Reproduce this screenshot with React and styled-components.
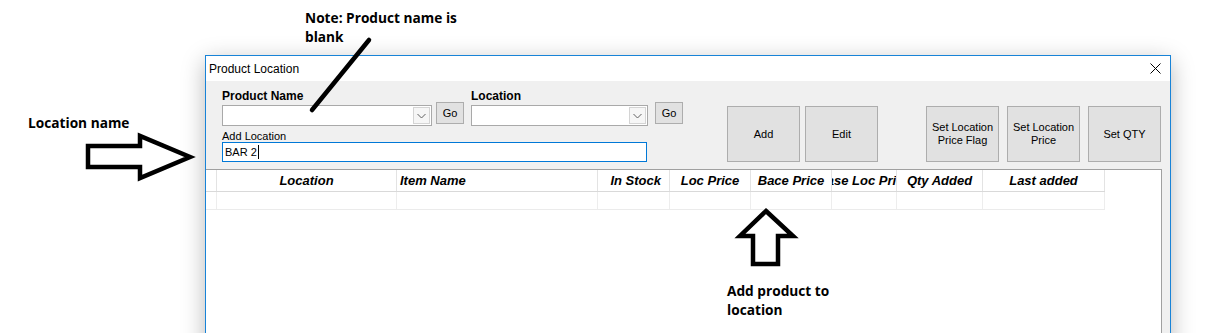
import React from "react";
import styled, { createGlobalStyle } from "styled-components";

const GlobalStyle = createGlobalStyle`
  html, body {
    margin: 0;
    padding: 0;
    background: #ffffff;
  }
  body {
    font-family: "Liberation Sans", Arial, sans-serif;
    color: #000000;
  }
`;

const Page = styled.div`
  position: relative;
  width: 1205px;
  height: 333px;
  overflow: hidden;
  background: #ffffff;
  padding: 55px 0 0 205px;
  box-sizing: border-box;
`;

const Window = styled.div`
  width: 966px;
  height: 320px;
  box-sizing: border-box;
  border: 1px solid #1883d7;
  background: #f0f0f0;
  box-shadow: 0 6px 22px rgba(0, 0, 0, 0.28);
  display: flex;
  flex-direction: column;
`;

const TitleBar = styled.div`
  height: 25px;
  flex: none;
  background: #ffffff;
  display: flex;
  align-items: center;
  justify-content: space-between;
  padding: 0 9px 0 3px;
  font-size: 12px;
`;

const TopArea = styled.div`
  height: 88px;
  flex: none;
  display: flex;
  align-items: flex-start;
  padding-left: 16px;
`;

const Form = styled.div`
  display: flex;
  flex-direction: column;
  padding-top: 8px;
`;

const FieldsRow = styled.div`
  display: flex;
`;

const Field = styled.div`
  display: flex;
  flex-direction: column;
  margin-left: ${(p) => p.$offset || 0}px;
`;

const BoldLabel = styled.div`
  font-size: 12px;
  font-weight: bold;
  line-height: 15px;
  height: 13px;
`;

const ComboRow = styled.div`
  display: flex;
  align-items: flex-start;
`;

const Combo = styled.div`
  width: ${(p) => p.$width}px;
  height: 21px;
  margin-top: 3px;
  box-sizing: border-box;
  border: 1px solid #a9a9a9;
  background: #ffffff;
  display: flex;
  justify-content: flex-end;
  padding: 1px;
`;

const ComboArrow = styled.div`
  width: 17px;
  box-sizing: border-box;
  border: 1px solid #d4d4d4;
  background: #f6f6f6;
  display: flex;
  align-items: center;
  justify-content: center;
`;

const Button = styled.div`
  box-sizing: border-box;
  width: ${(p) => p.$width}px;
  height: ${(p) => p.$height}px;
  margin-left: ${(p) => p.$gap || 0}px;
  background: #e1e1e1;
  border: 1px solid #adadad;
  font-size: 11px;
  line-height: 13px;
  display: flex;
  align-items: center;
  justify-content: center;
  text-align: center;
  flex: none;
`;

const SmallLabel = styled.div`
  font-size: 11px;
  line-height: 12px;
  margin-top: 4px;
`;

const TextBox = styled.div`
  width: 425px;
  height: 20px;
  box-sizing: border-box;
  border: 1px solid #0078d7;
  background: #ffffff;
  font-size: 11px;
  display: flex;
  align-items: center;
  padding-left: 2px;
`;

const Caret = styled.span`
  display: inline-block;
  width: 1px;
  height: 14px;
  background: #000000;
  margin-left: 1px;
`;

const ButtonBar = styled.div`
  display: flex;
  padding-top: 25px;
  margin-left: 44px;
`;

const Grid = styled.div`
  flex: 1;
  margin-right: 8px;
  background: #ffffff;
  border-top: 1px solid #a0a0a0;
  border-right: 1px solid #a0a0a0;
`;

const COLS = "11px 180px 201px 72px 81px 81px 65px 86px 122px";

const Row = styled.div`
  display: grid;
  grid-template-columns: ${COLS};
  height: ${(p) => (p.$header ? 22 : 18)}px;
  width: max-content;
  box-sizing: border-box;
  border-bottom: 1px solid ${(p) => (p.$header ? "#d9d9d9" : "#ebebeb")};
`;

const Cell = styled.div`
  border-right: 1px solid ${(p) => (p.$header ? "#e3e3e3" : "#ededed")};
  display: flex;
  align-items: center;
  justify-content: ${(p) => p.$align || "center"};
  overflow: hidden;
  white-space: nowrap;
  padding: ${(p) =>
    p.$align === "flex-start" ? "0 0 0 3px" : p.$align === "flex-end" ? "0 8px 0 0" : "0"};
  font-size: 13px;
  font-weight: bold;
  font-style: italic;
`;

const Note = styled.div`
  position: absolute;
  left: ${(p) => p.$x}px;
  top: ${(p) => p.$y}px;
  font-family: "Open Sans", "Noto Sans", sans-serif;
  font-weight: 700;
  font-size: 13.7px;
  line-height: 19px;
  color: #000000;
`;

const Overlay = styled.svg`
  position: absolute;
  left: 0;
  top: 0;
  pointer-events: none;
`;

const columns = [
  { title: "", align: "center" },
  { title: "Location", align: "center" },
  { title: "Item Name", align: "flex-start" },
  { title: "In Stock", align: "flex-end" },
  { title: "Loc Price", align: "center" },
  { title: "Bace Price", align: "center" },
  { title: "Base Loc Price", align: "center" },
  { title: "Qty Added", align: "center" },
  { title: "Last added", align: "center" },
];

function Chevron() {
  return (
    <svg width="9" height="6" viewBox="0 0 9 6">
      <path d="M0.5 1 L4.5 5 L8.5 1" fill="none" stroke="#606060" strokeWidth="1" />
    </svg>
  );
}

export default function App() {
  return (
    <Page>
      <GlobalStyle />
      <Window>
        <TitleBar>
          <span>Product Location</span>
          <svg width="11" height="11" viewBox="0 0 11 11">
            <path d="M0.5 0.5 L10.5 10.5 M10.5 0.5 L0.5 10.5" stroke="#000" strokeWidth="1" />
          </svg>
        </TitleBar>
        <TopArea>
          <Form>
            <FieldsRow>
              <Field>
                <BoldLabel>Product Name</BoldLabel>
                <ComboRow>
                  <Combo $width={210}>
                    <ComboArrow>
                      <Chevron />
                    </ComboArrow>
                  </Combo>
                  <Button $width={28} $height={22} $gap={4}>
                    Go
                  </Button>
                </ComboRow>
              </Field>
              <Field $offset={7}>
                <BoldLabel>Location</BoldLabel>
                <ComboRow>
                  <Combo $width={177}>
                    <ComboArrow>
                      <Chevron />
                    </ComboArrow>
                  </Combo>
                  <Button $width={28} $height={22} $gap={7}>
                    Go
                  </Button>
                </ComboRow>
              </Field>
            </FieldsRow>
            <SmallLabel>Add Location</SmallLabel>
            <TextBox>
              BAR 2<Caret />
            </TextBox>
          </Form>
          <ButtonBar>
            <Button $width={73} $height={56}>Add</Button>
            <Button $width={73} $height={56} $gap={5}>Edit</Button>
            <Button $width={73} $height={56} $gap={48}>
              Set Location
              <br />
              Price Flag
            </Button>
            <Button $width={73} $height={56} $gap={8}>
              Set Location
              <br />
              Price
            </Button>
            <Button $width={73} $height={56} $gap={8}>Set QTY</Button>
          </ButtonBar>
        </TopArea>
        <Grid>
          <Row $header>
            {columns.map((c, i) => (
              <Cell key={i} $header $align={c.align}>
                {c.title}
              </Cell>
            ))}
          </Row>
          <Row>
            {columns.map((c, i) => (
              <Cell key={i} />
            ))}
          </Row>
        </Grid>
      </Window>

      <Note $x={305} $y={8}>
        Note: Product name is
        <br />
        blank
      </Note>
      <Note $x={28} $y={113}>Location name</Note>
      <Note $x={727} $y={281}>
        Add product to
        <br />
        location
      </Note>

      <Overlay width="1205" height="333" viewBox="0 0 1205 333">
        <line x1="369" y1="40" x2="312" y2="110" stroke="#000" strokeWidth="4.5" strokeLinecap="round" />
        <polygon
          points="88,146 140,146 140,136 190,157 140,178 140,167 88,167"
          fill="#fff"
          stroke="#000"
          strokeWidth="4.5"
        />
        <polygon
          points="766,211 793,236 778,236 778,264 753,264 753,236 740,236"
          fill="#fff"
          stroke="#000"
          strokeWidth="4.5"
        />
      </Overlay>
    </Page>
  );
}
